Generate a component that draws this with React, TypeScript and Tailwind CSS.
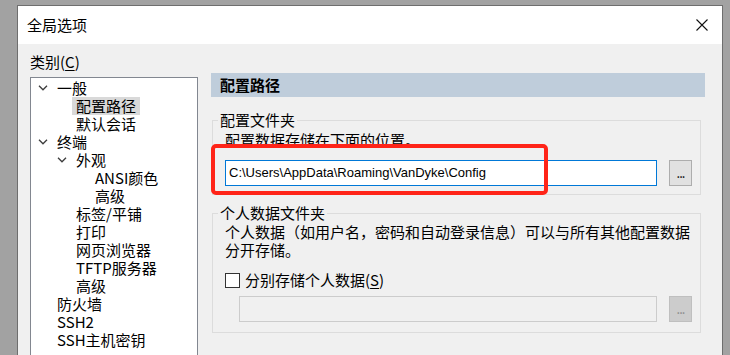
import React from "react";

type Node = { label: string; level: number; open?: boolean; selected?: boolean };

const tree: Node[] = [
  { label: "一般", level: 0, open: true },
  { label: "配置路径", level: 1, selected: true },
  { label: "默认会话", level: 1 },
  { label: "终端", level: 0, open: true },
  { label: "外观", level: 1, open: true },
  { label: "ANSI颜色", level: 2 },
  { label: "高级", level: 2 },
  { label: "标签/平铺", level: 1 },
  { label: "打印", level: 1 },
  { label: "网页浏览器", level: 1 },
  { label: "TFTP服务器", level: 1 },
  { label: "高级", level: 1 },
  { label: "防火墙", level: 0 },
  { label: "SSH2", level: 0 },
  { label: "SSH主机密钥", level: 0 },
];

const indent = ["pl-[7px]", "pl-[26px]", "pl-[45px]"];

function Chevron() {
  return (
    <svg width="10" height="6" viewBox="0 0 10 6" className="block">
      <polyline points="1,0.8 5,4.8 9,0.8" fill="none" stroke="#3c3c3c" strokeWidth="1.3" />
    </svg>
  );
}

function TreeRow({ node }: { node: Node }) {
  return (
    <div className={`flex items-center h-[18px] ${indent[node.level]}`}>
      <div className="w-[19px] shrink-0 flex items-center">{node.open && <Chevron />}</div>
      <span
        className={`leading-[18px] whitespace-nowrap ${node.selected ? "bg-[#d9d9d9] -mx-[4px] px-[4px]" : ""}`}
      >
        {node.label}
      </span>
    </div>
  );
}

function BrowseButton({ disabled }: { disabled?: boolean }) {
  return (
    <div
      className={`ml-[12px] w-[23px] h-[26px] border flex items-center justify-center pb-[2px] ${
        disabled ? "bg-[#cccccc] border-[#bfbfbf] text-[#8a8a8a]" : "bg-[#e1e1e1] border-[#adadad] text-[#000]"
      }`}
    >
      <span className="text-[13px] leading-none tracking-[-1px]">...</span>
    </div>
  );
}

export default function App() {
  return (
    <div className="w-[730px] h-[355px] overflow-hidden bg-[#a2a2a2] pt-[5px] pl-[17px] font-['Noto_Sans_CJK_SC','Liberation_Sans',sans-serif] text-[15px] text-black">
      <div className="w-[706px] h-[360px] border border-b-0 border-[#6e6e6e] bg-[#f0f0f0] flex flex-col">
        {/* title bar */}
        <div className="h-[38px] bg-white flex items-center justify-between pl-[9px] pr-[14px]">
          <span className="leading-[18px]">全局选项</span>
          <svg width="12" height="12" viewBox="0 0 12 12">
            <path d="M0.5 0.5 L11.5 11.5 M11.5 0.5 L0.5 11.5" stroke="#111" strokeWidth="1.1" />
          </svg>
        </div>

        <div className="flex flex-1 pl-[12px]">
          {/* left: category tree */}
          <div className="w-[168px] flex flex-col pt-[9px]">
            <div className="leading-[18px]">
              类别(<span className="underline underline-offset-2">C</span>)
            </div>
            <div className="mt-[6px] flex-1 bg-white border border-[#828790] pt-[1px]">
              {tree.map((n, i) => (
                <TreeRow key={i} node={n} />
              ))}
            </div>
          </div>

          {/* right: settings panel */}
          <div className="ml-[13px] w-[494px] pt-[29px]">
            <div className="h-[24px] bg-[#bfcddb] flex items-center pl-[9px] font-bold leading-[18px]">
              配置路径
            </div>

            <div className="relative mt-[14px]">
              <fieldset className="ml-[1px] w-[489px] border border-[#dcdcdc] px-0">
                <legend className="ml-[5px] px-[2px] leading-[18px]">配置文件夹</legend>
                <div className="pl-[12px] pt-[2px] pb-[8px]">
                  <div className="leading-[18px]">配置数据存储在下面的位置。</div>
                  <div className="flex mt-[11px]">
                    <div className="w-[432px] h-[26px] bg-white border border-[#0078d7] flex items-center pl-[3px] font-['Liberation_Sans',sans-serif] text-[13px] whitespace-nowrap">
                      C:\Users\AppData\Roaming\VanDyke\Config
                    </div>
                    <BrowseButton />
                  </div>
                </div>
              </fieldset>
              {/* red annotation box */}
              <div className="absolute left-0 top-[33px] w-[337px] h-[51px] border-[4px] border-[#ff2418] rounded-[5px] pointer-events-none" />
            </div>

            <fieldset className="mt-[9px] ml-[1px] w-[489px] border border-[#dcdcdc] px-0">
              <legend className="ml-[5px] px-[2px] leading-[18px]">个人数据文件夹</legend>
              <div className="pl-[12px] pt-[1px] pb-[10px]">
                <div className="leading-[18px]">
                  个人数据（如用户名，密码和自动登录信息）可以与所有其他配置数据
                  <br />
                  分开存储。
                </div>
                <div className="flex items-center h-[18px] mt-[12px]">
                  <div className="w-[15px] h-[15px] border border-[#333] bg-white" />
                  <span className="ml-[5px] leading-[18px]">
                    分别存储个人数据(<span className="underline underline-offset-2">S</span>)
                  </span>
                </div>
                <div className="flex mt-[7px] ml-[14px]">
                  <div className="w-[418px] h-[26px] bg-[#f0f0f0] border border-[#cccccc]" />
                  <BrowseButton disabled />
                </div>
              </div>
            </fieldset>
          </div>
        </div>
      </div>
    </div>
  );
}
